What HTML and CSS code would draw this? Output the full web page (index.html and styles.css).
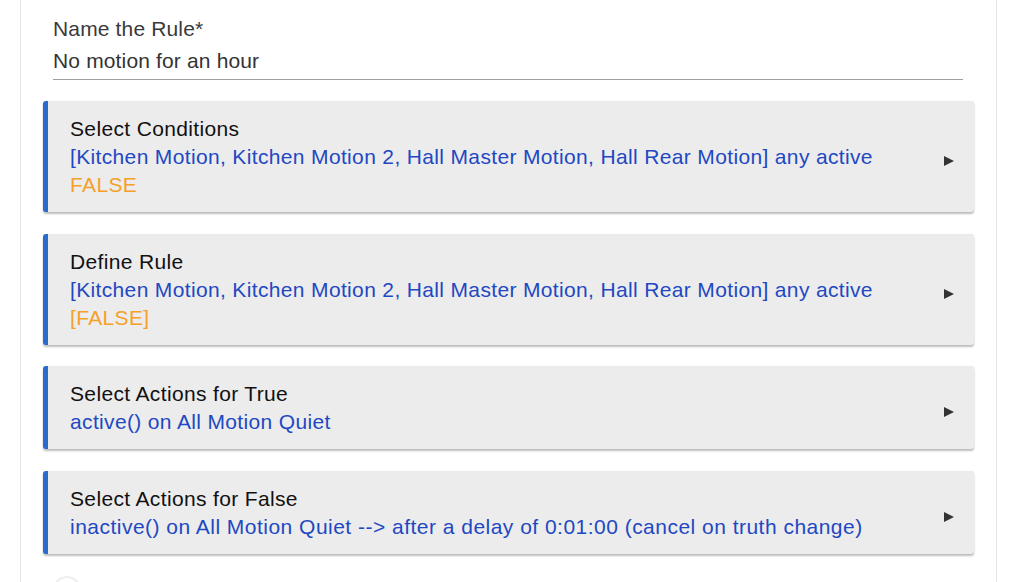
FILE: index.html
```html
<!DOCTYPE html>
<html>
<head>
<meta charset="utf-8">
<link rel="stylesheet" href="styles.css">
</head>
<body>
<div class="page">
  <div class="field">
    <div class="label">Name the Rule*</div>
    <div class="input">No motion for an hour</div>
  </div>
  <div class="cards">
    <div class="card">
      <div class="body">
        <div class="title">Select Conditions</div>
        <div class="blue">[Kitchen Motion, Kitchen Motion 2, Hall Master Motion, Hall Rear Motion] any active</div>
        <div class="orange">FALSE</div>
      </div>
      <div class="arrow"></div>
    </div>
    <div class="card">
      <div class="body">
        <div class="title">Define Rule</div>
        <div class="blue">[Kitchen Motion, Kitchen Motion 2, Hall Master Motion, Hall Rear Motion] any active</div>
        <div class="orange">[FALSE]</div>
      </div>
      <div class="arrow"></div>
    </div>
    <div class="card short">
      <div class="body">
        <div class="title">Select Actions for True</div>
        <div class="blue">active() on All Motion Quiet</div>
      </div>
      <div class="arrow"></div>
    </div>
    <div class="card">
      <div class="body">
        <div class="title">Select Actions for False</div>
        <div class="blue wide">inactive() on All Motion Quiet --&gt; after a delay of 0:01:00 (cancel on truth change)</div>
      </div>
      <div class="arrow"></div>
    </div>
  </div>
  <div class="next">
    <span class="circle"></span>
    <span class="next-text">Enable rule logging</span>
  </div>
</div>
</body>
</html>
```
FILE: styles.css
```css
html, body {
  margin: 0;
  padding: 0;
  background: #ffffff;
  overflow: hidden;
}
body {
  font-family: "Liberation Sans", Arial, sans-serif;
  width: 1024px;
  height: 582px;
}
.page {
  margin-left: 20px;
  width: 977px;
  height: 600px;
  border-left: 1px solid #e4e4e4;
  border-right: 1px solid #e4e4e4;
  box-sizing: border-box;
  padding: 0 22px 0 22px;
}
.field {
  padding: 17px 11px 0 10px;
}
.label {
  font-size: 21px;
  letter-spacing: 0.15px;
  line-height: 24px;
  color: #3a3a3a;
}
.input {
  font-size: 21px;
  letter-spacing: 0.15px;
  line-height: 24px;
  color: #333333;
  padding: 8px 0 6px;
  border-bottom: 1px solid #9e9e9e;
}
.cards {
  display: flex;
  flex-direction: column;
  gap: 22px;
  margin-top: 21px;
}
.card {
  display: flex;
  align-items: center;
  background: #ececec;
  border-left: 5px solid #2a6ccc;
  border-radius: 3px;
  box-shadow: 0 2px 2px rgba(0,0,0,0.25), 0 0 1px rgba(0,0,0,0.12);
  padding: 14px 20px 13px 22px;
}
.card.short {
  margin-top: -1px;
}
.body {
  flex: 1;
  font-size: 21px;
  letter-spacing: 0.35px;
  line-height: 28px;
}
.title {
  color: #111111;
}
.blue {
  color: #1f48c2;
}
.blue.wide {
  letter-spacing: 0.48px;
}
.orange {
  color: #f5a02a;
}
.arrow {
  width: 0;
  height: 0;
  border-top: 5px solid transparent;
  border-bottom: 5px solid transparent;
  border-left: 10px solid #333333;
  margin-top: 7px;
}
.next {
  display: flex;
  align-items: center;
  gap: 42px;
  margin-top: 22px;
  padding-left: 10px;
  font-size: 21px;
}
.circle {
  width: 24px;
  height: 24px;
  border-radius: 50%;
  border: 2px solid #eeeeee;
}
.next-text {
  color: #d8d8d8;
}
```
